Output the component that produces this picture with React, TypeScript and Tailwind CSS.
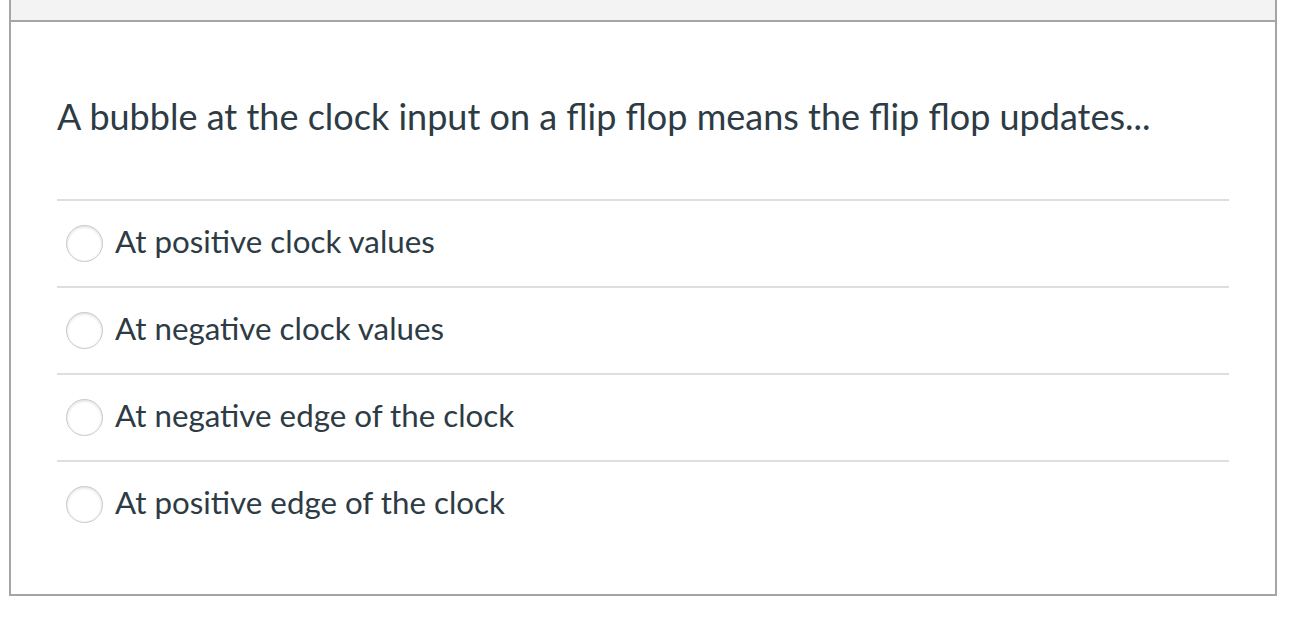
const options = [
  "At positive clock values",
  "At negative clock values",
  "At negative edge of the clock",
  "At positive edge of the clock",
];

export default function App() {
  return (
    <div
      className="w-[1300px] h-[636px] bg-white text-[#2d3b45]"
      style={{ fontFamily: "Lato, 'Open Sans', sans-serif" }}
    >
      <div className="ml-[9px] w-[1268px] border-x-2 border-b-2 border-[#a5a5a5]">
        <div className="h-[22px] bg-[#f3f3f3] border-b-2 border-[#a5a5a5]" />
        <div className="px-[46px] pb-[47px]">
          <div className="h-[177px] pt-[72px] text-[36px] leading-[44px]">
            A bubble at the clock input on a flip flop means the flip flop updates...
          </div>
          {options.map((opt) => (
            <div
              key={opt}
              className="h-[87px] border-t-2 border-[#dedede] flex items-center"
            >
              <span className="ml-[9px] w-[37px] h-[37px] rounded-full border border-[#c8c8c8] shadow-[inset_0_1px_3px_rgba(0,0,0,0.15)] bg-white" />
              <span className="ml-[12px] mb-[5px] text-[31.3px] leading-[36px]">{opt}</span>
            </div>
          ))}
        </div>
      </div>
    </div>
  );
}
